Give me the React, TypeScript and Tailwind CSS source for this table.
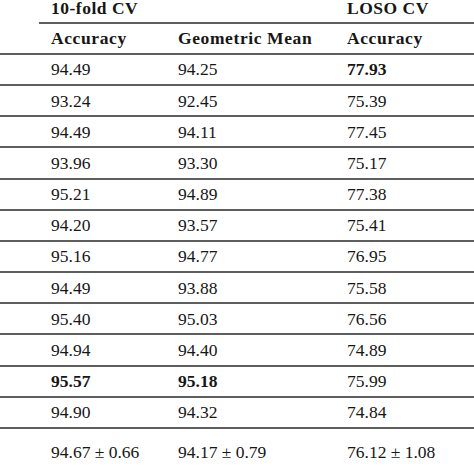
import React from "react";

const rows: [string, string, string, boolean[]][] = [
  ["94.49", "94.25", "77.93", [false, false, true]],
  ["93.24", "92.45", "75.39", [false, false, false]],
  ["94.49", "94.11", "77.45", [false, false, false]],
  ["93.96", "93.30", "75.17", [false, false, false]],
  ["95.21", "94.89", "77.38", [false, false, false]],
  ["94.20", "93.57", "75.41", [false, false, false]],
  ["95.16", "94.77", "76.95", [false, false, false]],
  ["94.49", "93.88", "75.58", [false, false, false]],
  ["95.40", "95.03", "76.56", [false, false, false]],
  ["94.94", "94.40", "74.89", [false, false, false]],
  ["95.57", "95.18", "75.99", [true, true, false]],
  ["94.90", "94.32", "74.84", [false, false, false]],
];

export default function App() {
  return (
    <div
      className="w-[474px] h-[474px] overflow-hidden bg-white text-[#161616] text-[17.5px]"
      style={{ fontFamily: '"Liberation Serif", serif' }}
    >
      <div className="h-[24px] flex flex-col">
        <div className="h-[22px] flex leading-none font-bold tracking-[0.5px]">
          <div className="w-[178px] pl-[51px]">10-fold CV</div>
          <div className="w-[169px]"></div>
          <div className="flex-1">LOSO CV</div>
        </div>
        <div className="ml-[39px] h-[2px] bg-[#5e5e5e]"></div>
      </div>
      <div className="h-[31px] flex items-center font-bold tracking-[0.6px] border-b-2 border-[#5e5e5e]">
        <div className="w-[178px] pl-[51px]">Accuracy</div>
        <div className="w-[169px]">Geometric Mean</div>
        <div className="flex-1">Accuracy</div>
      </div>
      {rows.map((r, i) => (
        <div
          key={i}
          className="h-[31.17px] flex items-center border-b-2 border-[#5e5e5e]"
        >
          <div className={`w-[178px] pl-[51px] ${r[3][0] ? "font-bold" : ""}`}>{r[0]}</div>
          <div className={`w-[169px] ${r[3][1] ? "font-bold" : ""}`}>{r[1]}</div>
          <div className={`flex-1 ${r[3][2] ? "font-bold" : ""}`}>{r[2]}</div>
        </div>
      ))}
      <div className="h-[46px] flex items-center">
        <div className="w-[178px] pl-[51px]">94.67 ± 0.66</div>
        <div className="w-[169px]">94.17 ± 0.79</div>
        <div className="flex-1">76.12 ± 1.08</div>
      </div>
    </div>
  );
}
